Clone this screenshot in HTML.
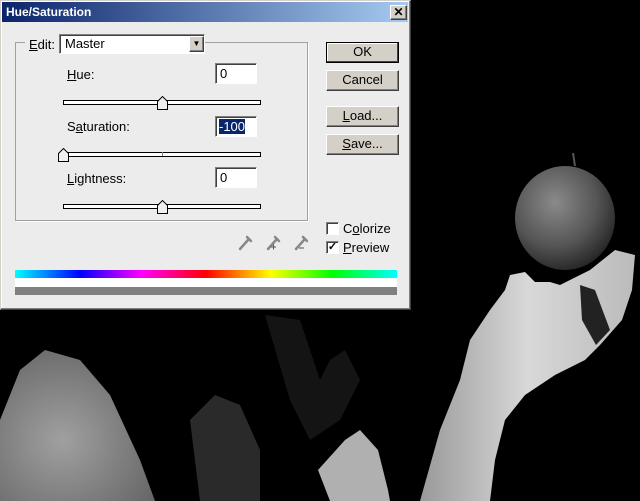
<!DOCTYPE html>
<html><head><style>
body{margin:0;width:640px;height:501px;background:#000;overflow:hidden;position:relative;font-family:"Liberation Sans",Tahoma,sans-serif;font-size:12px;color:#000}
.a{position:absolute}
.dlg{left:0;top:0;width:409px;height:308px;background:#ececec;border:1px solid #d4d0c8;border-right-color:#404040;border-bottom-color:#404040;box-shadow:inset -1px -1px #808080, inset 1px 1px #fff}
.title{left:2px;top:2px;width:406px;height:20px;background:linear-gradient(90deg,#0a246a,#a6caf0)}
.title span{position:absolute;left:4px;top:3px;color:#fff;font-weight:bold;font-size:12px}
.btn{background:#d4d0c8;border:1px solid;border-color:#fff #404040 #404040 #fff;box-shadow:inset -1px -1px #808080;text-align:center;line-height:18px;box-sizing:border-box}
.inp{background:#fff;border:1px solid;border-color:#808080 #fff #fff #808080;box-shadow:inset 1px 1px #404040;box-sizing:border-box;padding:3px 0 0 4px;line-height:13px}
.trk{height:5px;background:#fff;border:1px solid #000;box-sizing:border-box;width:198px;left:63px}
.cb{width:13px;height:13px;background:#fff;border:1px solid;border-color:#808080 #fff #fff #808080;box-shadow:inset 1px 1px #404040;box-sizing:border-box}
u{text-decoration:underline}
</style></head><body>
<svg class="a" style="left:0;top:0" width="640" height="501">
<defs>
<radialGradient id="ap" cx="0.4" cy="0.35" r="0.7"><stop offset="0" stop-color="#8a8a8a"/><stop offset="0.6" stop-color="#555"/><stop offset="1" stop-color="#222"/></radialGradient>
<linearGradient id="hd" x1="0" y1="0" x2="1" y2="0"><stop offset="0" stop-color="#999"/><stop offset="0.5" stop-color="#d8d8d8"/><stop offset="1" stop-color="#bbb"/></linearGradient>
<radialGradient id="sh" cx="0.4" cy="0.6" r="0.7"><stop offset="0" stop-color="#a0a0a0"/><stop offset="1" stop-color="#666"/></radialGradient>
</defs>
<line x1="573" y1="153" x2="575" y2="166" stroke="#555" stroke-width="2"/>
<ellipse cx="565" cy="218" rx="50" ry="52" fill="url(#ap)"/>
<path d="M420 501 L440 430 L460 380 L470 340 L490 310 L505 290 L510 275 L525 272 L535 282 L550 282 L560 285 L590 270 L615 250 L635 255 L632 290 L622 320 L600 345 L585 360 L555 375 L525 395 L505 420 L495 460 L490 501 Z" fill="url(#hd)"/>
<path d="M580 285 L595 290 L610 330 L596 345 L582 320Z" fill="#222"/>
<path d="M0 420 L20 370 L45 350 L80 360 L110 395 L140 460 L155 501 L0 501Z" fill="url(#sh)"/>
<path d="M190 420 L215 395 L240 405 L260 450 L260 501 L200 501Z" fill="#2a2a2a"/>
<path d="M318 470 L345 440 L360 430 L378 450 L388 490 L390 501 L330 501Z" fill="#b0b0b0"/>
<path d="M265 315 L300 320 L320 380 L330 360 L345 350 L360 380 L340 420 L310 440 L290 400Z" fill="#141414"/>
</svg>
<div class="a dlg"></div>
<div class="a title"><span>Hue/Saturation</span></div>
<div class="a btn" style="left:390px;top:5px;width:17px;height:15px;line-height:13px;font-weight:bold;font-size:12px">✕</div>
<div class="a" style="left:15px;top:42px;width:291px;height:177px;border:1px solid #a0a0a0;box-shadow:1px 1px #fff"></div>
<div class="a" style="left:25px;top:35px;width:34px;height:16px;background:#ececec"></div>
<div class="a" style="left:29px;top:37px;font-size:13px"><u>E</u>dit:</div>
<div class="a inp" style="left:59px;top:34px;width:146px;height:20px;padding:2px 0 0 5px;font-size:13px">Master</div>
<div class="a btn" style="left:189px;top:36px;width:15px;height:16px;font-size:8px;line-height:14px">▼</div>
<div class="a" style="left:67px;top:67px;font-size:13px"><u>H</u>ue:</div>
<div class="a inp" style="left:215px;top:63px;width:42px;height:21px;font-size:13px">0</div>
<div class="a trk" style="top:100px"></div>
<svg class="a" style="left:157px;top:96px" width="11" height="14"><path d="M0.5 5.5 L5.5 0.5 L10.5 5.5 V13.5 H0.5Z" fill="#f0f0f0" stroke="#000"/></svg>
<div class="a" style="left:67px;top:119px;font-size:13px">S<u>a</u>turation:</div>
<div class="a inp" style="left:215px;top:116px;width:42px;height:21px;padding-left:3px;font-size:13px"><span style="background:#0a246a;color:#fff">-100</span></div>
<div class="a trk" style="top:152px"></div>
<div class="a" style="left:162px;top:152px;width:1px;height:4px;background:#808080"></div>
<svg class="a" style="left:58px;top:148px" width="11" height="14"><path d="M0.5 5.5 L5.5 0.5 L10.5 5.5 V13.5 H0.5Z" fill="#f0f0f0" stroke="#000"/></svg>
<div class="a" style="left:67px;top:171px;font-size:13px"><u>L</u>ightness:</div>
<div class="a inp" style="left:215px;top:167px;width:42px;height:21px;font-size:13px">0</div>
<div class="a trk" style="top:204px"></div>
<svg class="a" style="left:157px;top:200px" width="11" height="14"><path d="M0.5 5.5 L5.5 0.5 L10.5 5.5 V13.5 H0.5Z" fill="#f0f0f0" stroke="#000"/></svg>
<div class="a btn" style="left:326px;top:42px;width:73px;height:21px;border:1px solid #000;box-shadow:inset -1px -1px #404040,inset 1px 1px #fff;font-size:13px">OK</div>
<div class="a btn" style="left:326px;top:70px;width:73px;height:21px;font-size:13px">Cancel</div>
<div class="a btn" style="left:326px;top:106px;width:73px;height:21px;font-size:13px"><u>L</u>oad...</div>
<div class="a btn" style="left:326px;top:134px;width:73px;height:21px;font-size:13px"><u>S</u>ave...</div>
<div class="a cb" style="left:326px;top:222px"></div>
<div class="a" style="left:343px;top:221px;font-size:13px">C<u>o</u>lorize</div>
<div class="a cb" style="left:326px;top:241px;font-size:11px;line-height:10px;text-align:center;font-weight:bold">✓</div>
<div class="a" style="left:343px;top:240px;font-size:13px"><u>P</u>review</div>
<svg class="a" style="left:236px;top:234px" width="72" height="18">
<g stroke="#888" stroke-width="2.5" fill="none" stroke-linecap="round">
<path d="M4 15 L12 6 M11 3 L15 7"/>
<path d="M32 15 L40 6 M39 3 L43 7"/>
<path d="M60 15 L68 6 M67 3 L71 7"/>
</g>
<g stroke="#555" stroke-width="1" fill="none"><path d="M35 13 h5 M37.5 10.5 v5 M63 14 h5"/></g>
</svg>
<div class="a" style="left:15px;top:270px;width:382px;height:8px;background:linear-gradient(90deg,#0ff,#00f 17%,#f0f 33%,#f00 50%,#ff0 67%,#0f0 83%,#0ff)"></div>
<div class="a" style="left:15px;top:278px;width:382px;height:9px;background:#fff"></div>
<div class="a" style="left:15px;top:287px;width:382px;height:8px;background:#808080"></div>
</body></html>
